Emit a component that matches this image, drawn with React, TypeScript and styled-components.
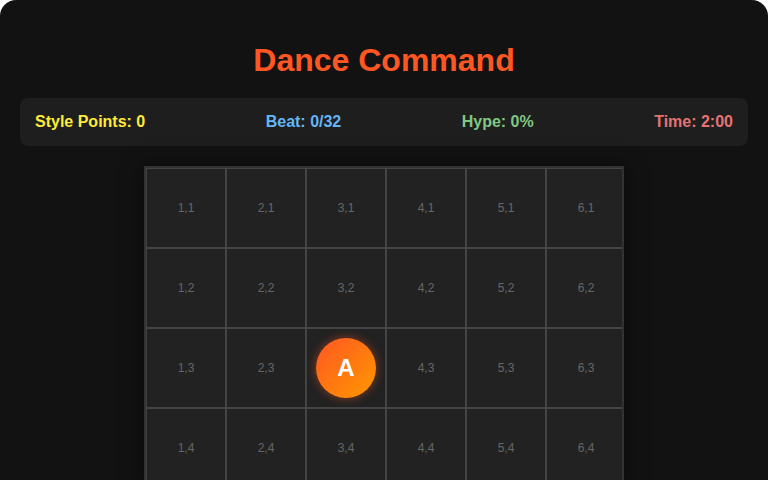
import styled, { createGlobalStyle } from 'styled-components';

const GlobalStyle = createGlobalStyle`
  html, body {
    margin: 0;
    background: #ffffff;
    font-family: "Liberation Sans", Arial, sans-serif;
    overflow: hidden;
  }
`;

const COLS = 6;
const ROWS = 4;

const dancer = { col: 3, row: 3, label: 'A' };

export default function App() {
  const cells = [];
  for (let r = 1; r <= ROWS; r++) {
    for (let c = 1; c <= COLS; c++) {
      const here = dancer.col === c && dancer.row === r;
      cells.push(
        <Cell key={`${c}-${r}`}>
          {here ? <Dancer>{dancer.label}</Dancer> : <CellLabel>{`${c},${r}`}</CellLabel>}
        </Cell>
      );
    }
  }

  return (
    <Container>
      <GlobalStyle />
      <Title>Dance Command</Title>
      <Stats>
        <Stat $color="#ffeb3b">Style Points: 0</Stat>
        <Stat $color="#64b5f6">Beat: 0/32</Stat>
        <Stat $color="#81c784">Hype: 0%</Stat>
        <Stat $color="#e57373">Time: 2:00</Stat>
      </Stats>
      <Floor>{cells}</Floor>
    </Container>
  );
}

//****************************************************//

const Container = styled.div`
  width: 768px;
  min-height: 600px;
  box-sizing: border-box;
  padding: 20px;
  background: #121212;
  border-radius: 16px;
`;

const Title = styled.h1`
  margin: 22px 0 19px;
  text-align: center;
  color: #ff5722;
  font-size: 32px;
  font-weight: bold;
  line-height: 37px;
`;

const Stats = styled.div`
  display: flex;
  justify-content: space-between;
  align-items: center;
  padding: 15px;
  background: #1e1e1e;
  border-radius: 8px;
`;

const Stat = styled.span<{ $color: string }>`
  color: ${(p) => p.$color};
  font-size: 16px;
  font-weight: bold;
  line-height: 18px;
`;

const Floor = styled.div`
  display: grid;
  grid-template-columns: repeat(${COLS}, 80px);
  grid-auto-rows: 80px;
  width: 480px;
  box-sizing: border-box;
  margin: 20px auto 0;
  border: 2px solid #333;
  background: #222;
  overflow: hidden;
  box-shadow: 0 0 20px rgba(0, 0, 0, 0.5);
`;

const Cell = styled.div`
  display: flex;
  align-items: center;
  justify-content: center;
  box-sizing: border-box;
  border: 1px solid #444;
  background: #222;
`;

const CellLabel = styled.span`
  color: #666;
  font-size: 12px;
`;

const Dancer = styled.div`
  width: 60px;
  height: 60px;
  border-radius: 50%;
  display: flex;
  align-items: center;
  justify-content: center;
  background: linear-gradient(135deg, #ff5722, #ff9800);
  box-shadow: 0 0 10px rgba(255, 87, 34, 0.5);
  color: #fff;
  font-size: 24px;
  font-weight: bold;
`;
